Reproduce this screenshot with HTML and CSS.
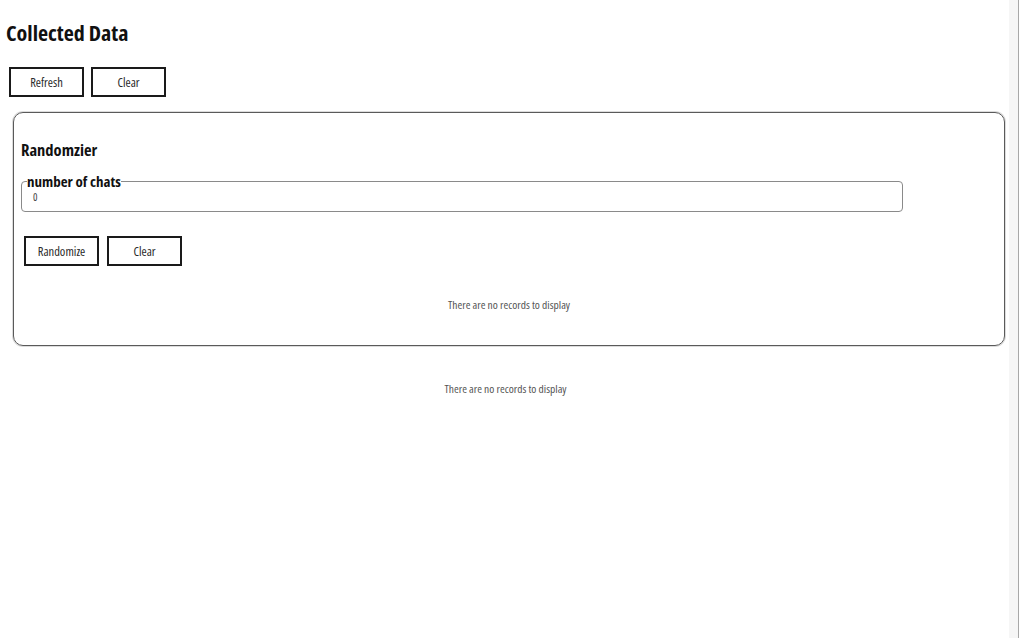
FILE: index.html
```html
<!DOCTYPE html>
<html lang="en">
<head>
<meta charset="utf-8">
<title>Collected Data</title>
<link rel="stylesheet" href="styles.css">
</head>
<body>
<div class="page">
  <main class="content">
    <h1 class="title">Collected Data</h1>
    <div class="actions">
      <button class="btn" type="button">Refresh</button>
      <button class="btn" type="button">Clear</button>
    </div>
    <section class="card">
      <h2 class="card-title">Randomzier</h2>
      <fieldset class="field">
        <legend class="field-label">number of chats</legend>
        <span class="field-value">0</span>
      </fieldset>
      <div class="actions card-actions">
        <button class="btn" type="button">Randomize</button>
        <button class="btn" type="button">Clear</button>
      </div>
      <p class="empty">There are no records to display</p>
    </section>
    <p class="empty outer-empty">There are no records to display</p>
  </main>
  <div class="edge"></div>
</div>
</body>
</html>
```

FILE: styles.css
```css
* { box-sizing: border-box; }

html, body {
  margin: 0;
  padding: 0;
  background: #ffffff;
  height: 100%;
}

body {
  font-family: "Open Sans", "Liberation Sans", sans-serif;
  font-stretch: 75%;
  color: #111;
}

.page {
  display: flex;
  min-height: 100%;
}

.content {
  flex: 1;
  padding: 20px 4px 0 6px;
}

.edge {
  width: 10px;
  background: #f6f6f6;
  border-right: 1px solid #a8a8a8;
  margin-right: 1px;
}

.title {
  margin: 0;
  font-size: 22px;
  line-height: 24px;
  font-weight: bold;
  color: #111;
}

.actions {
  display: flex;
  gap: 7px;
  margin: 23px 0 0 3px;
}

.btn {
  width: 75px;
  height: 30px;
  background: #fff;
  border: 2px solid #1a1a1a;
  border-radius: 0;
  font-family: inherit;
  font-stretch: inherit;
  font-size: 12.5px;
  color: #2a2a2a;
  padding: 0;
}

.card {
  margin: 15px 0 0 7px;
  border: 1px solid #5a5a5a;
  border-radius: 10px;
  padding: 27px 7px 33px 7px;
  box-shadow: 0 0 0 1px #dcdcdc;
}

.card-title {
  margin: 0;
  font-size: 16.5px;
  line-height: 20px;
  font-weight: bold;
  color: #111;
}

.field {
  margin: 11px 0 0 0;
  width: 882px;
  border: 1px solid #8a8a8a;
  border-radius: 4px;
  padding: 0 6px 7px 5px;
  min-width: 0;
}

.field-label {
  padding: 0;
  font-size: 15px;
  line-height: 20px;
  font-weight: bold;
  color: #111;
}

.field-value {
  display: block;
  margin-left: 6px;
  font-size: 10.5px;
  line-height: 13px;
  color: #444;
}

.card-actions {
  margin: 24px 0 0 3px;
  gap: 8px;
}

.empty {
  margin: 32px 0 0 0;
  text-align: center;
  font-size: 11.5px;
  line-height: 14px;
  color: #555;
}

.outer-empty {
  margin-top: 36px;
}
```
